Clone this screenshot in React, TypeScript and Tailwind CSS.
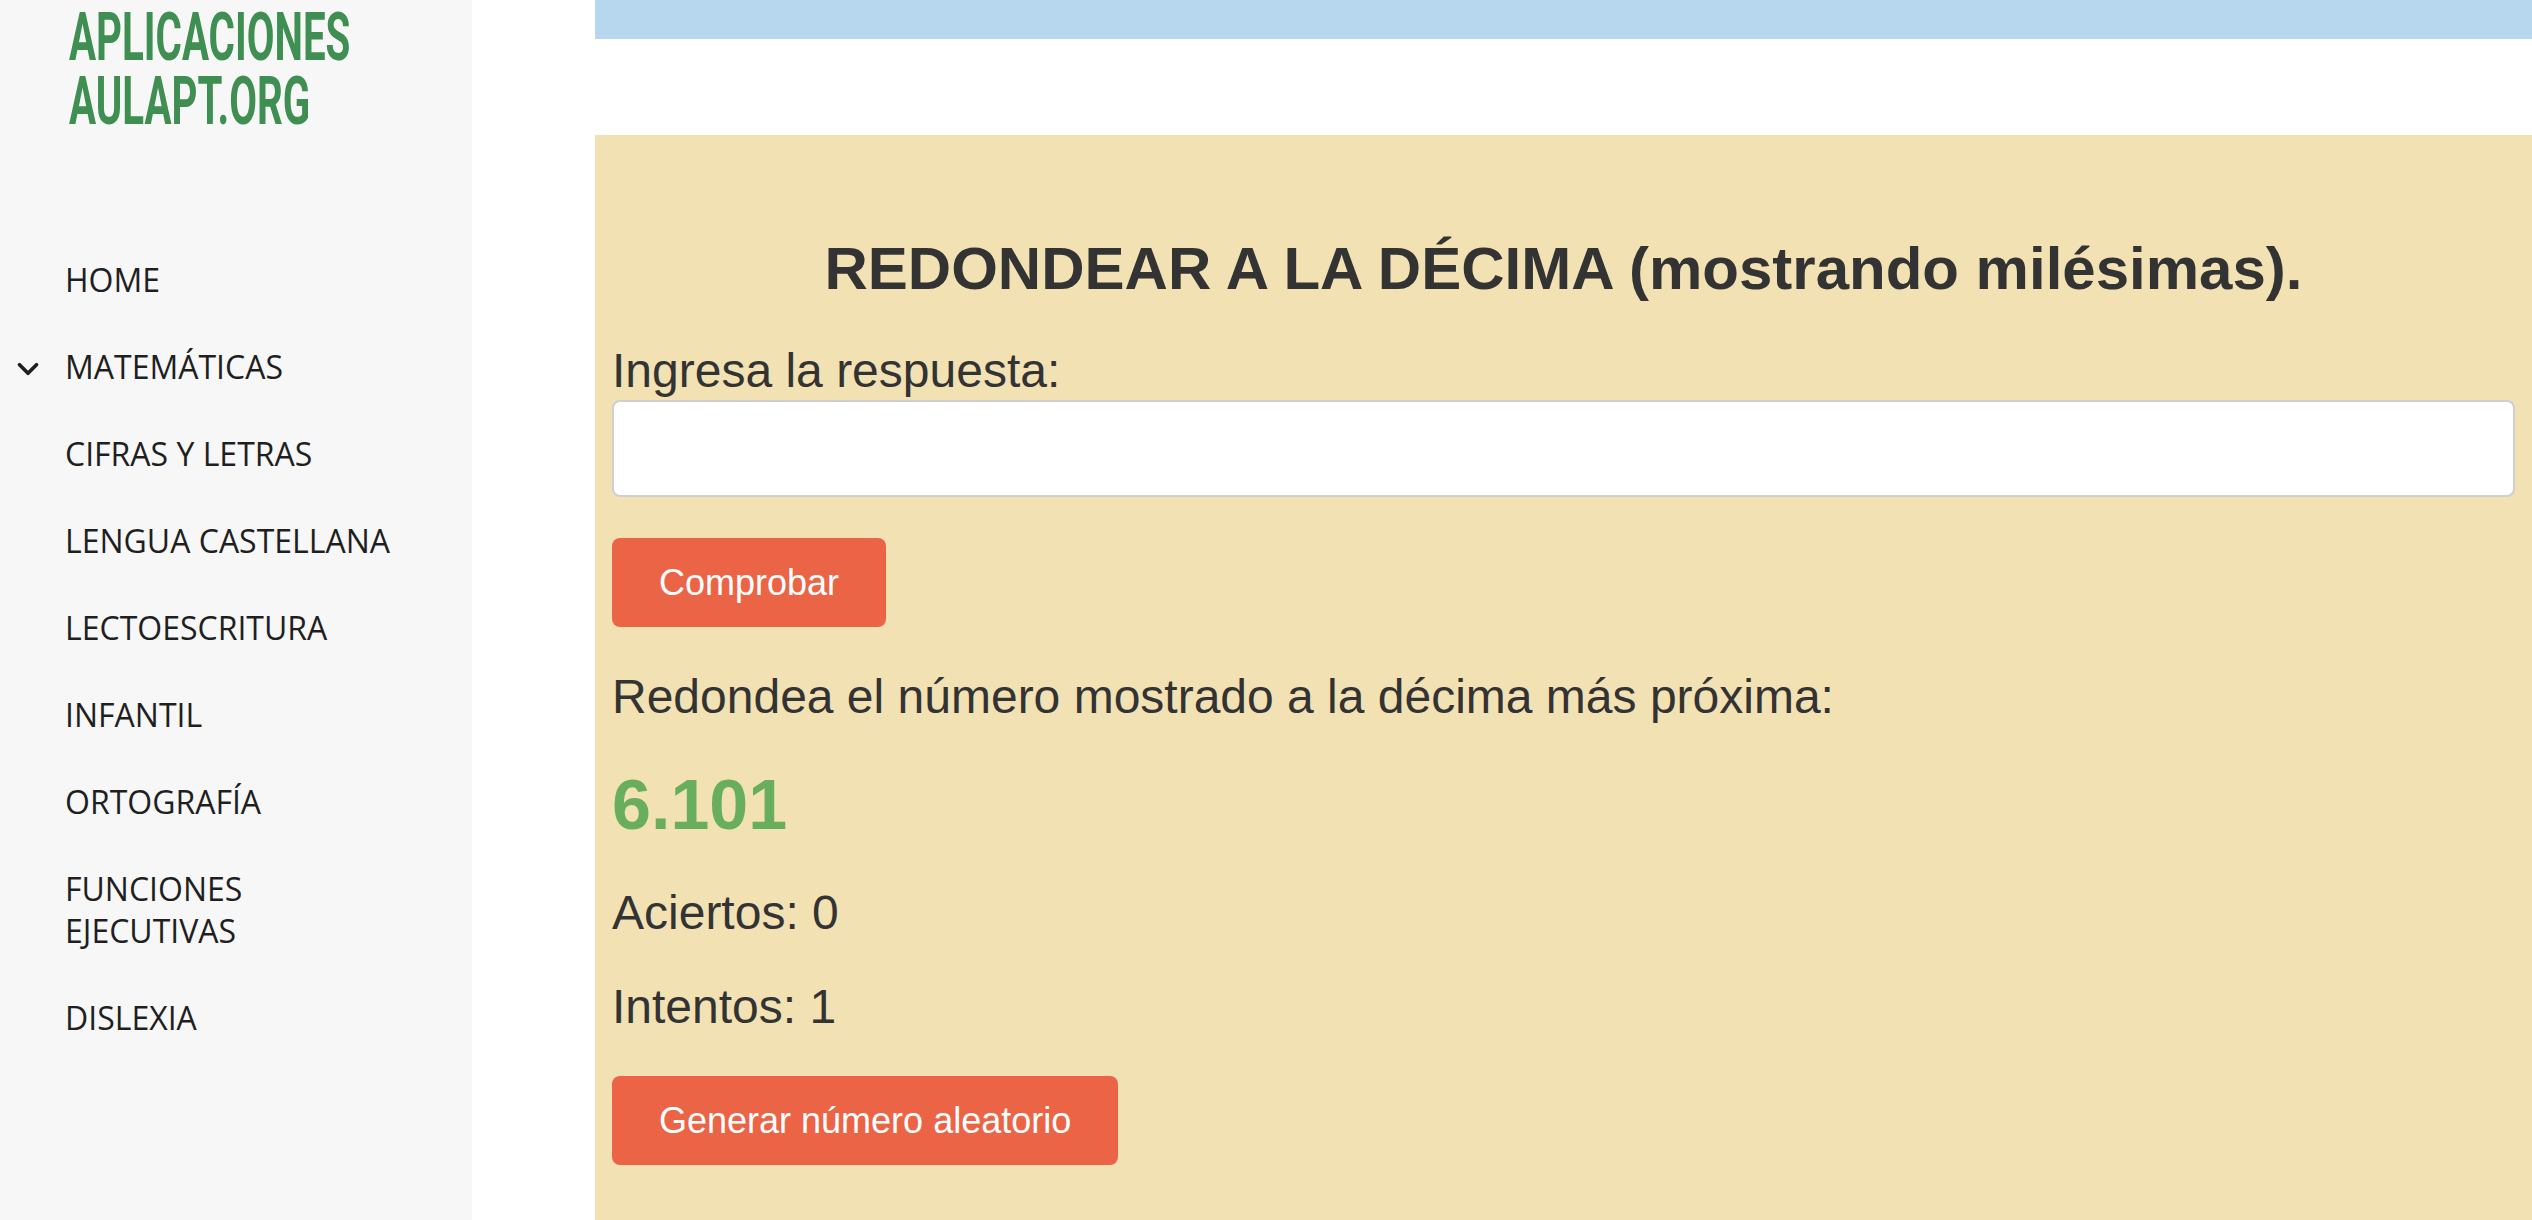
import { ChevronDown } from 'lucide-react';

const navItems = [
  { label: 'HOME' },
  { label: 'MATEMÁTICAS', open: true },
  { label: 'CIFRAS Y LETRAS' },
  { label: 'LENGUA CASTELLANA' },
  { label: 'LECTOESCRITURA' },
  { label: 'INFANTIL' },
  { label: 'ORTOGRAFÍA' },
  { label: 'FUNCIONES EJECUTIVAS' },
  { label: 'DISLEXIA' },
];

export default function App() {
  return (
    <div className="min-h-screen flex bg-white font-['Liberation_Sans',Arial,sans-serif]">
      {/* Sidebar */}
      <aside className="w-[472px] shrink-0 bg-[#f7f7f7] min-h-screen">
        <div className="pt-[6px] pl-[69px] h-[236px]">
          <div className="origin-left scale-x-[0.61] w-[480px] font-['Roboto',sans-serif] font-bold text-[66px] leading-[64px] text-[#3f8f52]">
            <div>APLICACIONES</div>
            <div>AULAPT.ORG</div>
          </div>
        </div>

        <nav className="font-['Open_Sans',sans-serif] text-[32px] leading-[42px] text-[#1f1f1f]">
          {navItems.map((item) => (
            <div key={item.label} className="relative py-[22.5px] pl-[65px]">
              {item.open && (
                <ChevronDown
                  className="absolute left-[11px] top-[29px] w-[34px] h-[34px]"
                  strokeWidth={2.6}
                />
              )}
              <div className="w-[340px]">{item.label}</div>
            </div>
          ))}
        </nav>
      </aside>

      {/* Main */}
      <main className="flex-1 pl-[123px] flex flex-col min-h-screen">
        <div className="h-[39px] bg-[#b7d7ef]" />
        <div className="h-[96px]" />
        <section className="flex-1 bg-[#f1e1b3] px-[17px] pt-[101px] text-[#333333]">
          <h2 className="text-center font-bold text-[60px] leading-[66px]">
            REDONDEAR A LA DÉCIMA (mostrando milésimas).
          </h2>

          <label className="block mt-[42px] text-[48px] leading-[54px]">Ingresa la respuesta:</label>
          <input
            type="text"
            className="block mt-[2px] w-full h-[97px] bg-white border-2 border-[#cfcfcf] rounded-[8px] outline-none"
          />

          <button className="mt-[41px] h-[89px] px-[47px] bg-[#ec6446] text-white text-[36px] leading-[40px] rounded-[8px] flex items-center">
            Comprobar
          </button>

          <p className="mt-[43px] text-[48px] leading-[54px]">
            Redondea el número mostrado a la décima más próxima:
          </p>

          <p className="mt-[41px] text-[70px] leading-[80px] font-bold text-[#68ae5c]">6.101</p>

          <p className="mt-[41px] text-[48px] leading-[54px]">Aciertos: 0</p>
          <p className="mt-[40px] text-[48px] leading-[54px]">Intentos: 1</p>

          <button className="mt-[42px] h-[89px] px-[47px] bg-[#ec6446] text-white text-[36px] leading-[40px] rounded-[8px] flex items-center">
            Generar número aleatorio
          </button>
        </section>
      </main>
    </div>
  );
}
